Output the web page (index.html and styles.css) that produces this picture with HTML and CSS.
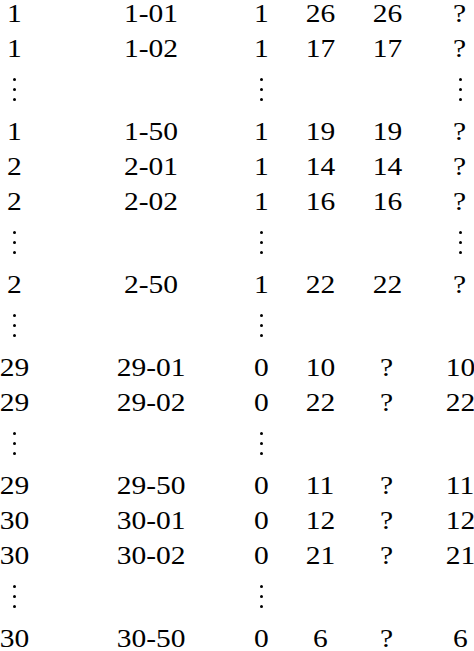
FILE: index.html
```html
<!DOCTYPE html>
<html>
<head>
<meta charset="utf-8">
<link rel="stylesheet" href="styles.css">
</head>
<body>
<div class="table">
  <div class="row t"><div><span>1</span></div><div><span>1-01</span></div><div><span>1</span></div><div><span>26</span></div><div><span>26</span></div><div><span>?</span></div></div>
  <div class="row t"><div><span>1</span></div><div><span>1-02</span></div><div><span>1</span></div><div><span>17</span></div><div><span>17</span></div><div><span>?</span></div></div>
  <div class="row d"><div><span class="vd"><i></i><i></i><i></i></span></div><div></div><div><span class="vd"><i></i><i></i><i></i></span></div><div></div><div></div><div><span class="vd"><i></i><i></i><i></i></span></div></div>
  <div class="row t"><div><span>1</span></div><div><span>1-50</span></div><div><span>1</span></div><div><span>19</span></div><div><span>19</span></div><div><span>?</span></div></div>
  <div class="row t"><div><span>2</span></div><div><span>2-01</span></div><div><span>1</span></div><div><span>14</span></div><div><span>14</span></div><div><span>?</span></div></div>
  <div class="row t"><div><span>2</span></div><div><span>2-02</span></div><div><span>1</span></div><div><span>16</span></div><div><span>16</span></div><div><span>?</span></div></div>
  <div class="row d"><div><span class="vd"><i></i><i></i><i></i></span></div><div></div><div><span class="vd"><i></i><i></i><i></i></span></div><div></div><div></div><div><span class="vd"><i></i><i></i><i></i></span></div></div>
  <div class="row t"><div><span>2</span></div><div><span>2-50</span></div><div><span>1</span></div><div><span>22</span></div><div><span>22</span></div><div><span>?</span></div></div>
  <div class="row d"><div><span class="vd"><i></i><i></i><i></i></span></div><div></div><div><span class="vd"><i></i><i></i><i></i></span></div><div></div><div></div><div></div></div>
  <div class="row t"><div><span>29</span></div><div><span>29-01</span></div><div><span>0</span></div><div><span>10</span></div><div><span>?</span></div><div><span>10</span></div></div>
  <div class="row t"><div><span>29</span></div><div><span>29-02</span></div><div><span>0</span></div><div><span>22</span></div><div><span>?</span></div><div><span>22</span></div></div>
  <div class="row d"><div><span class="vd"><i></i><i></i><i></i></span></div><div></div><div><span class="vd"><i></i><i></i><i></i></span></div><div></div><div></div><div></div></div>
  <div class="row t"><div><span>29</span></div><div><span>29-50</span></div><div><span>0</span></div><div><span>11</span></div><div><span>?</span></div><div><span>11</span></div></div>
  <div class="row t"><div><span>30</span></div><div><span>30-01</span></div><div><span>0</span></div><div><span>12</span></div><div><span>?</span></div><div><span>12</span></div></div>
  <div class="row t"><div><span>30</span></div><div><span>30-02</span></div><div><span>0</span></div><div><span>21</span></div><div><span>?</span></div><div><span>21</span></div></div>
  <div class="row d"><div><span class="vd"><i></i><i></i><i></i></span></div><div></div><div><span class="vd"><i></i><i></i><i></i></span></div><div></div><div></div><div></div></div>
  <div class="row t"><div><span>30</span></div><div><span>30-50</span></div><div><span>0</span></div><div><span>6</span></div><div><span>?</span></div><div><span>6</span></div></div>
</div>
</body>
</html>
```
FILE: styles.css
```css
html, body {
  margin: 0;
  padding: 0;
  background: #fff;
  overflow: hidden;
}
body {
  width: 474px;
  height: 651px;
  font-family: "Liberation Serif", "Times New Roman", serif;
  font-size: 25px;
  color: #000;
}
.table {
  padding-top: 0;
  margin-top: -4.5px;
  width: 474px;
}
.row {
  display: grid;
  grid-template-columns: 68px 166px 54px 64px 70px 52px;
}
.row > div {
  display: flex;
  justify-content: center;
  align-items: center;
  min-width: 0;
}
.row > div:first-child {
  padding-right: 40px;
}
.row > div:last-child {
  padding-left: 24px;
}
.t {
  height: 35px;
  line-height: 35px;
}
.t span {
  display: inline-block;
  white-space: nowrap;
  transform: scaleX(1.18);
}
.d {
  height: 48px;
}
.vd {
  display: flex;
  flex-direction: column;
  gap: 7px;
}
.vd i {
  display: block;
  width: 3px;
  height: 3px;
  border-radius: 50%;
  background: #000;
}
```
